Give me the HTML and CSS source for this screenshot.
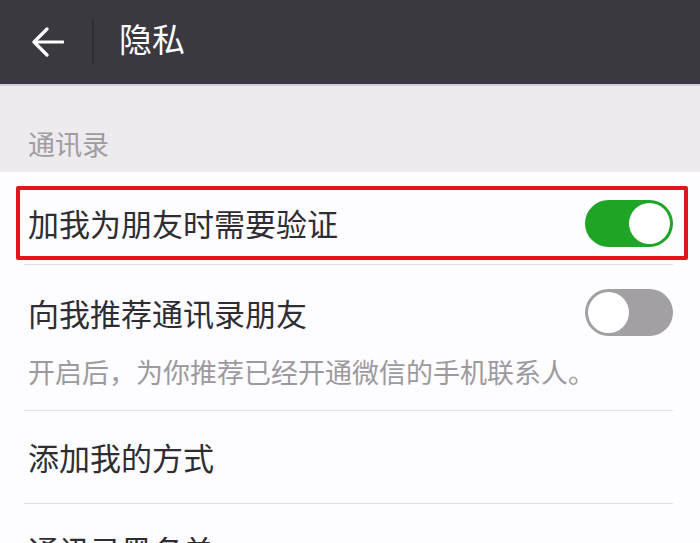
FILE: index.html
```html
<!DOCTYPE html>
<html lang="zh-CN">
<head>
    <meta charset="UTF-8">
    <meta name="viewport" content="width=device-width, initial-scale=1.0">
    <title>隐私</title>
    <link rel="stylesheet" href="styles.css">
</head>
<body>
    <header class="topbar">
        <svg class="back" width="32" height="32" viewBox="0 0 32 32">
            <path d="M2 16 H31 M15 3 L2 16 L15 29" fill="none" stroke="#ffffff" stroke-width="3.2" stroke-linecap="round" stroke-linejoin="round"/>
        </svg>
        <span class="bar-divider"></span>
        <h1 class="title">隐私</h1>
    </header>
    <main>
        <div class="group-label">通讯录</div>
        <section class="list">
            <div class="row marked">
                <span class="row-text">加我为朋友时需要验证</span>
                <span class="switch on"><span class="knob"></span></span>
            </div>
            <div class="row">
                <div class="row-main">
                    <span class="row-text">向我推荐通讯录朋友</span>
                    <span class="switch"><span class="knob"></span></span>
                </div>
                <p class="row-note">开启后，为你推荐已经开通微信的手机联系人。</p>
            </div>
            <div class="row plain">
                <span class="row-text">添加我的方式</span>
            </div>
            <div class="row plain">
                <span class="row-text">通讯录黑名单</span>
            </div>
        </section>
    </main>
</body>
</html>
```

FILE: styles.css
```css
body {
    margin: 0;
    padding: 0;
    background-color: #fdfcfe;
    font-family: "Noto Sans CJK SC", "Noto Sans", sans-serif;
    color: #2f2d33;
    overflow: hidden;
}

.topbar {
    display: flex;
    align-items: center;
    height: 84px;
    padding-left: 32px;
    background-color: #3a3940;
    border-bottom: 2px solid #d2d0d5;
}

.back {
    display: block;
}

.bar-divider {
    width: 2px;
    height: 46px;
    margin-left: 28px;
    background-color: #2f2e34;
}

.title {
    margin: 0 0 0 25px;
    font-size: 33px;
    font-weight: normal;
    color: #ffffff;
    line-height: 1;
    padding-bottom: 7px;
}

.group-label {
    background-color: #eeebef;
    padding: 39px 28px 9px;
    font-size: 27px;
    line-height: 38px;
    color: #a09ca2;
}

.list {
    background-color: #fdfcfe;
}

.row {
    margin: 0 27px 0 24px;
    padding-left: 4px;
    border-top: 1px solid #e3e0e5;
}

.row.marked {
    display: flex;
    align-items: center;
    justify-content: space-between;
    box-sizing: border-box;
    height: 74px;
    margin: 14px 12px 4px 16px;
    padding: 0 11px 0 8px;
    border: 4px solid #e2151c;
    border-radius: 2px;
}

.row-text {
    font-size: 31px;
    line-height: 40px;
}

.row-main {
    display: flex;
    align-items: center;
    justify-content: space-between;
    padding-top: 24px;
}

.row-note {
    margin: 17px 0 0;
    padding-bottom: 19px;
    font-size: 27px;
    line-height: 38px;
    color: #9d9a9f;
}

.row.plain {
    display: flex;
    align-items: center;
    height: 92px;
}

.switch {
    display: flex;
    box-sizing: border-box;
    width: 88px;
    height: 47px;
    padding: 3px;
    border-radius: 24px;
    background-color: #a29fa5;
}

.switch.on {
    justify-content: flex-end;
    background-color: #1fa526;
}

.knob {
    width: 41px;
    height: 41px;
    border-radius: 50%;
    background-color: #ffffff;
}
```
